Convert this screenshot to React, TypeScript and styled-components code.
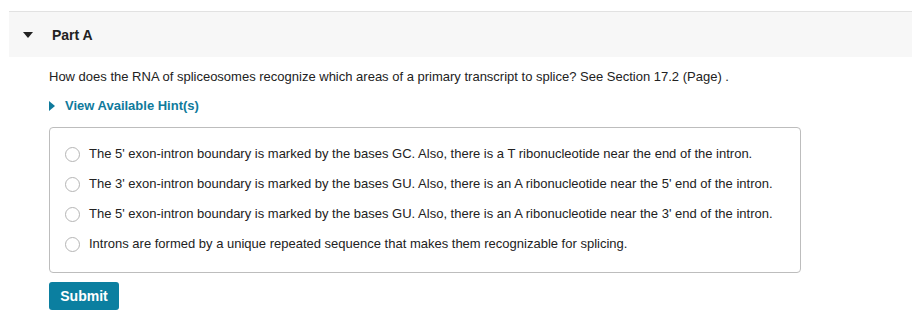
import React from 'react';
import styled, { createGlobalStyle } from 'styled-components';

const GlobalStyle = createGlobalStyle`
  body {
    margin: 0;
    background: #fff;
    font-family: "Liberation Sans", Arial, Helvetica, sans-serif;
    color: #222;
  }
`;

const Page = styled.div`
  padding: 11px 0 0 9px;
`;

const PartHeader = styled.div`
  display: flex;
  align-items: center;
  height: 45px;
  background: #f7f7f7;
  border-top: 1px solid #e2e2e2;
  padding-left: 14px;
`;

const Caret = styled.span<{ $dir: 'down' | 'right'; $color: string }>`
  display: inline-block;
  width: 0;
  height: 0;
  ${(p) =>
    p.$dir === 'down'
      ? `border-left: 5px solid transparent;
         border-right: 5px solid transparent;
         border-top: 6px solid ${p.$color};`
      : `border-top: 5px solid transparent;
         border-bottom: 5px solid transparent;
         border-left: 6px solid ${p.$color};`}
`;

const PartTitle = styled.h2`
  margin: 0 0 0 19px;
  font-size: 14px;
  font-weight: 700;
  color: #222;
`;

const Body = styled.div`
  padding: 10px 0 0 40px;
`;

const Question = styled.p`
  margin: 0;
  font-size: 13px;
  line-height: 20px;
  color: #222;
`;

const HintToggle = styled.button`
  display: flex;
  align-items: center;
  gap: 10px;
  margin: 11px 0 0;
  padding: 0;
  border: none;
  background: none;
  font-family: inherit;
  font-size: 13px;
  font-weight: 700;
  color: #0f7a9c;
  cursor: pointer;
`;

const Choices = styled.div`
  width: 752px;
  box-sizing: border-box;
  margin-top: 14px;
  border: 1px solid #bdbdbd;
  border-radius: 4px;
  padding: 16px 0 18px 15px;
  display: flex;
  flex-direction: column;
  gap: 10px;
`;

const Choice = styled.label`
  display: flex;
  align-items: center;
  gap: 9px;
  font-size: 13px;
  line-height: 20px;
  color: #222;
  cursor: pointer;
`;

const Radio = styled.span`
  width: 13px;
  height: 13px;
  border: 1px solid #b5b5b5;
  border-radius: 50%;
  background: #fff;
  flex-shrink: 0;
`;

const SubmitButton = styled.button`
  margin-top: 9px;
  width: 70px;
  height: 28px;
  border: none;
  border-radius: 3px;
  background: #0b7fa0;
  color: #fff;
  font-family: inherit;
  font-size: 14px;
  font-weight: 700;
  cursor: pointer;
`;

const options = [
  'The 5\' exon-intron boundary is marked by the bases GC. Also, there is a T ribonucleotide near the end of the intron.',
  'The 3\' exon-intron boundary is marked by the bases GU. Also, there is an A ribonucleotide near the 5\' end of the intron.',
  'The 5\' exon-intron boundary is marked by the bases GU. Also, there is an A ribonucleotide near the 3\' end of the intron.',
  'Introns are formed by a unique repeated sequence that makes them recognizable for splicing.',
];

export default function App() {
  return (
    <>
      <GlobalStyle />
      <Page>
        <PartHeader>
          <Caret $dir='down' $color='#222' />
          <PartTitle>Part A</PartTitle>
        </PartHeader>
        <Body>
          <Question>
            How does the RNA of spliceosomes recognize which areas of a primary transcript to splice? See Section 17.2 (Page) .
          </Question>
          <HintToggle>
            <Caret $dir='right' $color='#0f7a9c' />
            View Available Hint(s)
          </HintToggle>
          <Choices>
            {options.map((o) => (
              <Choice key={o}>
                <Radio />
                {o}
              </Choice>
            ))}
          </Choices>
          <SubmitButton>Submit</SubmitButton>
        </Body>
      </Page>
    </>
  );
}
